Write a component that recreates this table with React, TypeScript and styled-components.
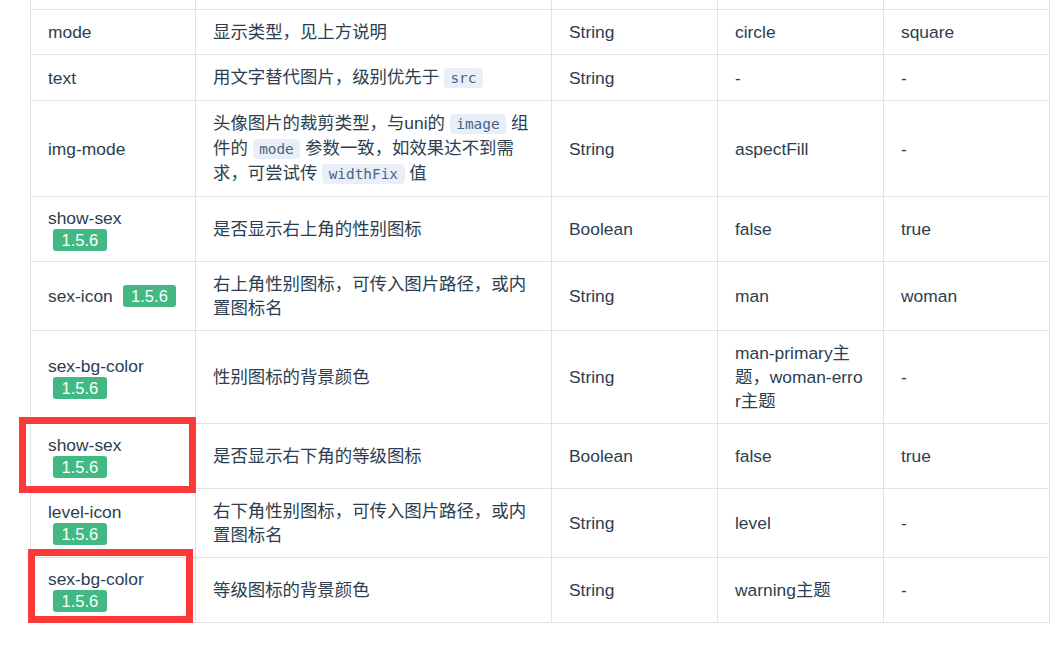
import React from "react";
import styled, { createGlobalStyle } from "styled-components";

const GlobalStyle = createGlobalStyle`
  html, body { margin: 0; padding: 0; background: #ffffff; }
  body {
    font-family: "Liberation Sans", "Noto Sans CJK SC", sans-serif;
    color: #2c3e50;
  }
`;

const Page = styled.main`
  padding: 0 0 0 30px;
`;

const Table = styled.div`
  width: 1020px;
  border-left: 1px solid #dfe2e5;
  font-size: 17.4px;
  line-height: 24px;
`;

const Row = styled.div`
  position: relative;
  display: grid;
  grid-template-columns: 165px 356px 166px 166px 166px;
`;

const Cell = styled.div<{ $stub?: boolean }>`
  box-sizing: border-box;
  display: flex;
  align-items: center;
  height: ${(p) => (p.$stub ? "10px" : "auto")};
  padding: ${(p) => (p.$stub ? "0" : "10px 17px")};
  border-right: 1px solid #dfe2e5;
  border-bottom: 1px solid #dfe2e5;
  word-break: break-all;
`;

const CellText = styled.div<{ $tight?: boolean }>`
  width: 100%;
  line-height: ${(p) => (p.$tight ? "22px" : "24px")};
`;

const Badge = styled.span`
  display: inline-block;
  vertical-align: top;
  height: 22px;
  line-height: 22px;
  margin-left: 5px;
  padding: 0 8.5px;
  border-radius: 3px;
  background: #42b983;
  color: #ffffff;
  font-size: 16.5px;
  word-break: normal;
`;

const Code = styled.code`
  font-family: "DejaVu Sans Mono", "Liberation Mono", monospace;
  font-size: 14.4px;
  color: #476582;
  background: #e9eef8;
  padding: 2px 6.5px;
  border-radius: 4px;
`;

const Marker = styled.span<{ $top: number; $left: number; $w: number; $h: number }>`
  position: absolute;
  top: ${(p) => p.$top}px;
  left: ${(p) => p.$left}px;
  width: ${(p) => p.$w}px;
  height: ${(p) => p.$h}px;
  box-sizing: border-box;
  border: 7px solid #fc3838;
  pointer-events: none;
  z-index: 2;
`;

type RowData = {
  name: string;
  badge?: boolean;
  desc: React.ReactNode;
  type: string;
  def: string;
  opt: string;
  mark?: { top: number; left: number; w: number; h: number };
};

const rows: RowData[] = [
  { name: "mode", desc: "显示类型，见上方说明", type: "String", def: "circle", opt: "square" },
  {
    name: "text",
    desc: (
      <>
        用文字替代图片，级别优先于 <Code>src</Code>
      </>
    ),
    type: "String",
    def: "-",
    opt: "-",
  },
  {
    name: "img-mode",
    desc: (
      <>
        头像图片的裁剪类型，与uni的 <Code>image</Code> 组件的 <Code>mode</Code> 参数一致，如效果达不到需求，可尝试传{" "}
        <Code>widthFix</Code> 值
      </>
    ),
    type: "String",
    def: "aspectFill",
    opt: "-",
  },
  { name: "show-sex", badge: true, desc: "是否显示右上角的性别图标", type: "Boolean", def: "false", opt: "true" },
  { name: "sex-icon", badge: true, desc: "右上角性别图标，可传入图片路径，或内置图标名", type: "String", def: "man", opt: "woman" },
  {
    name: "sex-bg-color",
    badge: true,
    desc: "性别图标的背景颜色",
    type: "String",
    def: "man-primary主题，woman-error主题",
    opt: "-",
  },
  {
    name: "show-sex",
    badge: true,
    desc: "是否显示右下角的等级图标",
    type: "Boolean",
    def: "false",
    opt: "true",
    mark: { top: -7, left: -12, w: 177, h: 76 },
  },
  { name: "level-icon", badge: true, desc: "右下角性别图标，可传入图片路径，或内置图标名", type: "String", def: "level", opt: "-" },
  {
    name: "sex-bg-color",
    badge: true,
    desc: "等级图标的背景颜色",
    type: "String",
    def: "warning主题",
    opt: "-",
    mark: { top: -9, left: -3, w: 165, h: 74 },
  },
];

export default function App() {
  return (
    <>
      <GlobalStyle />
      <Page>
        <Table>
          <Row>
            <Cell $stub />
            <Cell $stub />
            <Cell $stub />
            <Cell $stub />
            <Cell $stub />
          </Row>
          {rows.map((r, i) => (
            <Row key={i}>
              <Cell>
                <CellText $tight>
                  {r.name}
                  {r.badge && (
                    <>
                      {" "}
                      <Badge>1.5.6</Badge>
                    </>
                  )}
                </CellText>
              </Cell>
              <Cell>
                <CellText>{r.desc}</CellText>
              </Cell>
              <Cell>
                <CellText>{r.type}</CellText>
              </Cell>
              <Cell>
                <CellText>{r.def}</CellText>
              </Cell>
              <Cell>
                <CellText>{r.opt}</CellText>
              </Cell>
              {r.mark && <Marker $top={r.mark.top} $left={r.mark.left} $w={r.mark.w} $h={r.mark.h} />}
            </Row>
          ))}
        </Table>
      </Page>
    </>
  );
}
